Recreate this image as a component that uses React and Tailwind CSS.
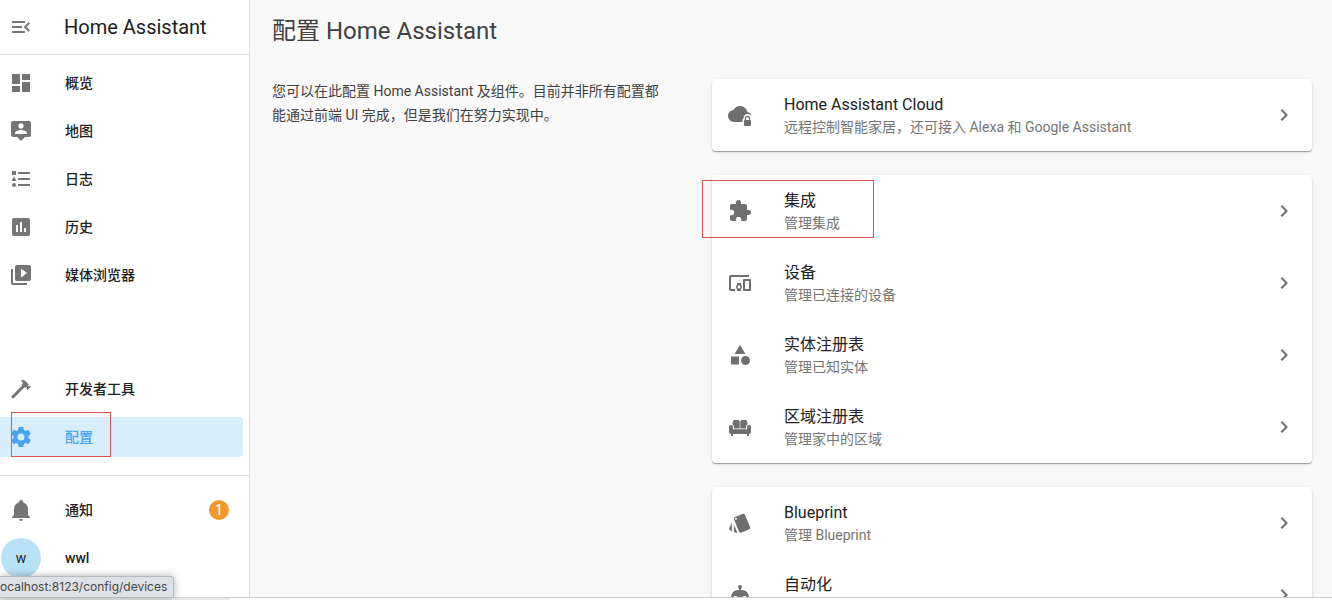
const ICONS = {
  menuOpen: "M21,15.61L19.59,17L14.58,12L19.59,7L21,8.39L17.44,12L21,15.61M3,6H16V8H3V6M3,13V11H13V13H3M3,18V16H16V18H3Z",
  dashboard: "M13,3V9H21V3M13,21H21V11H13M3,21H11V15H3M3,13H11V3H3V13Z",
  account: "M20,2H4A2,2 0 0,0 2,4V16A2,2 0 0,0 4,18H8L12,22L16,18H20A2,2 0 0,0 22,16V4A2,2 0 0,0 20,2M12,4.3C13.5,4.3 14.7,5.5 14.7,7C14.7,8.5 13.5,9.7 12,9.7C10.5,9.7 9.3,8.5 9.3,7C9.3,5.5 10.5,4.3 12,4.3M18,15H6V14.1C6,12.1 10,11 12,11C14,11 18,12.1 18,14.1V15Z",
  list: "M5,9.5L7.5,14H2.5L5,9.5M3,4H7V8H3V4M5,20A2,2 0 0,0 7,18A2,2 0 0,0 5,16A2,2 0 0,0 3,18A2,2 0 0,0 5,20M9,5V7H21V5H9M9,19H21V17H9V19M9,13H21V11H9V13Z",
  chart: "M19,3H5A2,2 0 0,0 3,5V19A2,2 0 0,0 5,21H19A2,2 0 0,0 21,19V5A2,2 0 0,0 19,3M9,17H7V10H9V17M13,17H11V7H13V17M17,17H15V13H17V17Z",
  play: "M4,6H2V20A2,2 0 0,0 4,22H18V20H4V6M20,2H8A2,2 0 0,0 6,4V16A2,2 0 0,0 8,18H20A2,2 0 0,0 22,16V4A2,2 0 0,0 20,2M12,14.5V5.5L18,10L12,14.5Z",
  hammer: "M2,19.63L13.43,8.2L12.72,7.5L14.14,6.07L12,3.89C13.2,2.7 15.09,2.7 16.27,3.89L19.87,7.5L18.45,8.91H21.29L22,9.62L18.45,13.21L17.74,12.5V9.62L16.27,11.04L15.56,10.33L4.13,21.76L2,19.63Z",
  cog: "M12,15.5A3.5,3.5 0 0,1 8.5,12A3.5,3.5 0 0,1 12,8.5A3.5,3.5 0 0,1 15.5,12A3.5,3.5 0 0,1 12,15.5M19.43,12.97C19.47,12.65 19.5,12.33 19.5,12C19.5,11.67 19.47,11.34 19.43,11L21.54,9.37C21.73,9.22 21.78,8.95 21.66,8.73L19.66,5.27C19.54,5.05 19.27,4.96 19.05,5.05L16.56,6.05C16.04,5.66 15.5,5.32 14.87,5.07L14.5,2.42C14.46,2.18 14.25,2 14,2H10C9.75,2 9.54,2.18 9.5,2.42L9.13,5.07C8.5,5.32 7.96,5.66 7.44,6.05L4.95,5.05C4.73,4.96 4.46,5.05 4.34,5.27L2.34,8.73C2.21,8.95 2.27,9.22 2.46,9.37L4.57,11C4.53,11.34 4.5,11.67 4.5,12C4.5,12.33 4.53,12.65 4.57,12.97L2.46,14.63C2.27,14.78 2.21,15.05 2.34,15.27L4.34,18.73C4.46,18.95 4.73,19.03 4.95,18.95L7.44,17.94C7.96,18.34 8.5,18.68 9.13,18.93L9.5,21.58C9.54,21.82 9.75,22 10,22H14C14.25,22 14.46,21.82 14.5,21.58L14.87,18.93C15.5,18.67 16.04,18.34 16.56,17.94L19.05,18.95C19.27,19.03 19.54,18.95 19.66,18.73L21.66,15.27C21.78,15.05 21.73,14.78 21.54,14.63L19.43,12.97Z",
  bell: "M21,19V20H3V19L5,17V11C5,7.9 7.03,5.17 10,4.29C10,4.19 10,4.1 10,4A2,2 0 0,1 12,2A2,2 0 0,1 14,4C14,4.1 14,4.19 14,4.29C16.97,5.17 19,7.9 19,11V17L21,19M14,21A2,2 0 0,1 12,23A2,2 0 0,1 10,21",
  cloudLock: "M19.35,9.03C18.67,5.59 15.64,3 12,3C9.11,3 6.6,4.64 5.35,7.03C2.34,7.36 0,9.9 0,13A6,6 0 0,0 6,19H14.5V16.2C14.9,15.7 15.3,15.4 15.5,15.2C15.6,12.8 17.4,11 19.6,11C21.4,11 22.6,12 23.4,13.2C23,10.9 21.5,9.2 19.35,9.03M22.2,17V15.5A2.7,2.7 0 0,0 16.8,15.5V17A1,1 0 0,0 16,18V22A1,1 0 0,0 17,23H22A1,1 0 0,0 23,22V18A1,1 0 0,0 22.2,17M21,17H18V15.5A1.5,1.5 0 0,1 21,15.5V17Z",
  puzzle: "M20.5,11H19V7C19,5.89 18.1,5 17,5H13V3.5A2.5,2.5 0 0,0 10.5,1A2.5,2.5 0 0,0 8,3.5V5H4A2,2 0 0,0 2,7V10.8H3.5C5,10.8 6.2,12 6.2,13.5C6.2,15 5,16.2 3.5,16.2H2V20A2,2 0 0,0 4,22H7.8V20.5C7.8,19 9,17.8 10.5,17.8C12,17.8 13.2,19 13.2,20.5V22H17A2,2 0 0,0 19,20V16H20.5A2.5,2.5 0 0,0 23,13.5A2.5,2.5 0 0,0 20.5,11Z",
  devices: "M3 6H21V4H3C1.9 4 1 4.9 1 6V18C1 19.1 1.9 20 3 20H7V18H3V6M13 12H9V13.78C8.39 14.33 8 15.11 8 16C8 16.89 8.39 17.67 9 18.22V20H13V18.22C13.61 17.67 14 16.88 14 16S13.61 14.33 13 13.78V12M11 17.5C10.17 17.5 9.5 16.83 9.5 16S10.17 14.5 11 14.5 12.5 15.17 12.5 16 11.83 17.5 11 17.5M22 8H16C15.5 8 15 8.5 15 9V19C15 19.5 15.5 20 16 20H22C22.5 20 23 19.5 23 19V9C23 8.5 22.5 8 22 8M21 18H17V10H21V18Z",
  shape: "M11,13.5V21.5H3V13.5H11M12,2L17.5,11H6.5L12,2M17.5,13C20,13 22,15 22,17.5C22,20 20,22 17.5,22C15,22 13,20 13,17.5C13,15 15,13 17.5,13Z",
  sofa: "M6.5,5H10.2A1.5,1.5 0 0,1 11.7,6.5V13.5H6V12A3.4,3.4 0 0,0 4.2,9L5,6.2A1.5,1.5 0 0,1 6.5,5M13.8,5H17.5A1.5,1.5 0 0,1 19,6.2L19.8,9A3.4,3.4 0 0,0 18,12V13.5H12.3V6.5A1.5,1.5 0 0,1 13.8,5M3,10A2,2 0 0,1 5,12V14.2H19V12A2,2 0 0,1 23,12V17A2,2 0 0,1 21,19V21H19V19H5V21H3V19A2,2 0 0,1 1,17V12A2,2 0 0,1 3,10Z",
  swatch: "M2.53,19.65L3.87,20.21V11.18L1.44,17.04C1.03,18.06 1.5,19.23 2.53,19.65M22.03,15.95L17.07,4C16.76,3.23 16.03,2.77 15.26,2.75C15,2.75 14.73,2.79 14.47,2.9L7.1,5.95C6.35,6.26 5.89,7 5.87,7.75C5.86,8 5.91,8.29 6,8.55L11,20.5C11.29,21.28 12.03,21.74 12.81,21.75C13.07,21.75 13.33,21.7 13.58,21.6L20.94,18.55C21.96,18.13 22.45,16.96 22.03,15.95M7.88,8.75A1,1 0 0,1 6.88,7.75A1,1 0 0,1 7.88,6.75C8.43,6.75 8.88,7.2 8.88,7.75C8.88,8.3 8.43,8.75 7.88,8.75M5.88,19.75A2,2 0 0,0 7.88,21.75H9.33L5.88,13.41V19.75Z",
  robot: "M12,2A2,2 0 0,1 14,4C14,4.74 13.6,5.39 13,5.73V7H14A7,7 0 0,1 21,14H22A1,1 0 0,1 23,15V18A1,1 0 0,1 22,19H21V20A2,2 0 0,1 19,22H5A2,2 0 0,1 3,20V19H2A1,1 0 0,1 1,18V15A1,1 0 0,1 2,14H3A7,7 0 0,1 10,7H11V5.73C10.4,5.39 10,4.74 10,4A2,2 0 0,1 12,2M7.5,13A2.5,2.5 0 0,0 5,15.5A2.5,2.5 0 0,0 7.5,18A2.5,2.5 0 0,0 10,15.5A2.5,2.5 0 0,0 7.5,13M16.5,13A2.5,2.5 0 0,0 14,15.5A2.5,2.5 0 0,0 16.5,18A2.5,2.5 0 0,0 19,15.5A2.5,2.5 0 0,0 16.5,13Z",
  chevron: "M8.59,16.58L13.17,12L8.59,7.41L10,6L16,12L10,18L8.59,16.58Z",
};

function Icon({ name, className = "size-6" }) {
  return (
    <svg viewBox="0 0 24 24" className={`shrink-0 fill-current ${className}`} aria-hidden="true">
      <path d={ICONS[name]} />
    </svg>
  );
}

const mainNav = [
  ["dashboard", "概览"],
  ["account", "地图"],
  ["list", "日志"],
  ["chart", "历史"],
  ["play", "媒体浏览器"],
];

const sections = [
  [["cloudLock", "Home Assistant Cloud", "远程控制智能家居，还可接入 Alexa 和 Google Assistant"]],
  [
    ["puzzle", "集成", "管理集成", true],
    ["devices", "设备", "管理已连接的设备"],
    ["shape", "实体注册表", "管理已知实体"],
    ["sofa", "区域注册表", "管理家中的区域"],
  ],
  [
    ["swatch", "Blueprint", "管理 Blueprint"],
    ["robot", "自动化", ""],
  ],
];

function NavItem({ icon, label, active, children }) {
  return (
    <a
      href="#"
      className={`relative mr-1.5 flex h-10 items-center rounded-r pl-[9px] pr-3.5 text-sm font-medium ${
        active ? "bg-[#d7edfc] text-[#46a4ee]" : "text-[#212121]"
      }`}
    >
      <Icon name={icon} className={active ? "size-6" : "size-6 text-[#757575]"} />
      <span className="ml-8 flex-1">{label}</span>
      {children}
    </a>
  );
}

function ConfigRow({ icon, title, detail, marked }) {
  return (
    <a href="#" className="relative flex h-[72px] items-center px-4">
      <Icon name={icon} className="size-6 text-[#6f6f6f]" />
      <span className="ml-8 flex min-w-0 flex-1 flex-col">
        <span className="text-base leading-6 text-[#212121]">{title}</span>
        <span className="min-h-5 text-sm leading-5 text-[#757575]">{detail}</span>
      </span>
      <Icon name="chevron" className="size-6 text-[#6f6f6f]" />
      {marked && <span className="absolute -left-2.5 top-[5px] h-[58px] w-[172px] border border-[#d9534f]" />}
    </a>
  );
}

export default function App() {
  return (
    <div className="relative flex h-screen flex-col overflow-hidden bg-white font-[Roboto,'Noto_Sans_CJK_SC',sans-serif] text-[#212121]">
      <div className="flex min-h-0 flex-1 overflow-hidden border-b border-[#d0d0d0]">
        <aside className="flex w-[250px] shrink-0 flex-col border-r border-[#dedede] bg-white">
          <header className="flex h-[55px] shrink-0 items-center border-b border-[#dcdcdc] pl-[9px]">
            <button type="button" aria-label="菜单" className="text-[#757575]">
              <Icon name="menuOpen" />
            </button>
            <span className="ml-[31px] text-xl">Home Assistant</span>
          </header>
          <nav className="flex flex-1 flex-col justify-between">
            <div className="flex flex-col gap-2 pt-2">
              {mainNav.map(([icon, label]) => (
                <NavItem key={icon} icon={icon} label={label} />
              ))}
            </div>
            <div className="flex flex-col gap-2 pb-[18px]">
              <NavItem icon="hammer" label="开发者工具" />
              <NavItem icon="cog" label="配置" active>
                <span className="absolute -top-[5px] left-[11px] h-[45px] w-[100px] border border-[#d9534f]" />
              </NavItem>
            </div>
          </nav>
          <div className="flex h-[122px] shrink-0 flex-col gap-2 border-t border-[#dcdcdc] pt-3.5">
            <NavItem icon="bell" label="通知">
              <span className="flex size-5 items-center justify-center rounded-full bg-[#ee9a2f] text-sm font-normal text-white">1</span>
            </NavItem>
            <a href="#" className="flex h-10 items-center pl-px text-sm font-medium">
              <span className="flex size-10 items-center justify-center rounded-full bg-[#b9e2f8] font-normal">w</span>
              <span className="ml-6">wwl</span>
            </a>
          </div>
        </aside>

        <main className="min-w-0 flex-1 overflow-hidden bg-[#f9f9f9] pl-[22px] pr-5">
          <h1 className="pt-[15px] text-2xl leading-8 text-[#414141]">配置 Home Assistant</h1>
          <div className="mt-8 flex gap-10">
            <p className="min-w-0 flex-[2] text-sm leading-6 text-[#414141]">
              您可以在此配置 Home Assistant 及组件。目前并非所有配置都能通过前端 UI 完成，但是我们在努力实现中。
            </p>
            <div className="flex flex-[3] flex-col gap-6">
              {sections.map((rows, i) => (
                <section key={i} className="rounded bg-white shadow-[0_1px_1px_rgba(0,0,0,0.35),0_1px_4px_rgba(0,0,0,0.1)]">
                  {rows.map(([icon, title, detail, marked]) => (
                    <ConfigRow key={title} icon={icon} title={title} detail={detail} marked={marked} />
                  ))}
                </section>
              ))}
            </div>
          </div>
        </main>
      </div>
      <div className="h-0.5 w-[230px] shrink-0 bg-[#ececec]" />
      <div className="absolute bottom-0.5 left-0 flex h-[22px] items-center rounded-tr border border-l-0 border-[#b5b9be] bg-[#dee1e5] pr-1.5 font-[Inter,sans-serif] text-xs text-[#45484c] shadow-[0_0_8px_rgba(0,0,0,0.3)]">
        ocalhost:8123/config/devices
      </div>
    </div>
  );
}
